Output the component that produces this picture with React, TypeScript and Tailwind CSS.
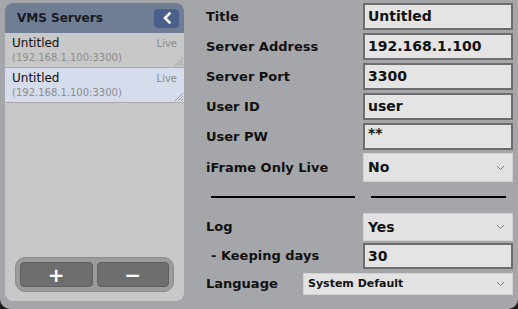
import React from 'react';

const servers = [
  { title: 'Untitled', addr: '(192.168.1.100:3300)', selected: false },
  { title: 'Untitled', addr: '(192.168.1.100:3300)', selected: true },
];

function Grip() {
  return (
    <svg className="absolute bottom-[1px] right-[1px]" width="9" height="9" viewBox="0 0 9 9">
      <path d="M9 1 L1 9 M9 4 L4 9 M9 7 L7 9" stroke="#9b9b9b" strokeWidth="1" />
    </svg>
  );
}

function Chevron() {
  return (
    <svg width="9" height="7" viewBox="0 0 9 7" className="absolute right-[7px] top-1/2 -translate-y-1/2">
      <path d="M1 1.5 L4.5 5 L8 1.5" fill="none" stroke="#7a7a7a" strokeWidth="1" />
    </svg>
  );
}

function TextBox({ value, small = false }: { value: string; small?: boolean }) {
  return (
    <div className="flex h-full w-[150px] items-center border-2 border-[#6d6d6d] bg-[#e4e4e4] pl-[3px] text-[14px] font-bold text-[#121212]">
      <span className={small ? 'self-start pt-[1px] leading-[14px]' : ''}>{value}</span>
    </div>
  );
}

function Select({ value, w = 'w-[150px]', size = 'text-[14px]' }: { value: string; w?: string; size?: string }) {
  return (
    <div className={`relative flex h-full ${w} items-center border border-[#d2d2d2] bg-[#e2e2e2] pl-[4px] ${size} font-bold text-[#121212]`}>
      {value}
      <Chevron />
    </div>
  );
}

function Row({ label, h, mt, indent = '', children }: { label: string; h: string; mt: string; indent?: string; children: React.ReactNode }) {
  return (
    <div className={`flex ${h} ${mt} items-center justify-between`}>
      <span className={`text-[13px] font-bold text-[#111] ${indent}`}>{label}</span>
      {children}
    </div>
  );
}

export default function App() {
  return (
    <div className="h-[309px] w-[518px] bg-[#1c1c1c] font-['DejaVu_Sans',sans-serif]">
      <div className="flex h-full w-full rounded-b-[10px] bg-[#a5a6aa]">
        {/* server list */}
        <div className="ml-[5px] mt-[3px] flex h-[298px] w-[179px] flex-col overflow-hidden rounded-[8px] bg-[#c8c8c8]">
          <div className="flex h-[30px] shrink-0 items-center justify-between bg-[#6f7d95] pl-[12px] pr-[5px]">
            <span className="text-[12px] font-bold text-[#161a22]">VMS Servers</span>
            <button className="flex h-[19px] w-[25px] items-center justify-center rounded-[4px] bg-[#4b5f8c]">
              <svg width="10" height="12" viewBox="0 0 10 12">
                <path d="M7.5 1.5 L3 6 L7.5 10.5" fill="none" stroke="#fff" strokeWidth="2.6" strokeLinecap="square" />
              </svg>
            </button>
          </div>
          {servers.map((s, i) => (
            <div
              key={i}
              className={`relative flex h-[35px] shrink-0 flex-col justify-center border-b border-[#a8a8a8] pl-[7px] ${s.selected ? 'bg-[#d6dcec]' : 'bg-[#c8c8c8]'}`}
            >
              <div className="flex items-baseline justify-between pr-[7px]">
                <span className="text-[12px] leading-[15px] text-[#101010]">{s.title}</span>
                <span className="text-[10px] text-[#8c8c8c]">Live</span>
              </div>
              <span className="text-[10px] leading-[13px] text-[#8c8c8c]">{s.addr}</span>
              <Grip />
            </div>
          ))}
          <div className="flex-1" />
          <div className="mx-[10px] mb-[9px] flex h-[35px] gap-[4px] rounded-[10px] border border-[#8c8c8c] bg-[#9b9b9b] p-[4px]">
            <button className="flex flex-1 items-center justify-center rounded-[4px] border border-[#5f5f5f] bg-[#6e6e6e] text-[20px] font-bold leading-none text-white">
              +
            </button>
            <button className="flex flex-1 items-center justify-center rounded-[4px] border border-[#5f5f5f] bg-[#6e6e6e] text-[20px] font-bold leading-none text-white">
              −
            </button>
          </div>
        </div>

        {/* settings */}
        <div className="flex flex-1 flex-col pl-[22px] pr-[5px]">
          <Row label="Title" h="h-[27px]" mt="mt-[3px]"><TextBox value="Untitled" /></Row>
          <Row label="Server Address" h="h-[27px]" mt="mt-[3px]"><TextBox value="192.168.1.100" /></Row>
          <Row label="Server Port" h="h-[27px]" mt="mt-[3px]"><TextBox value="3300" /></Row>
          <Row label="User ID" h="h-[27px]" mt="mt-[3px]"><TextBox value="user" /></Row>
          <Row label="User PW" h="h-[27px]" mt="mt-[3px]"><TextBox value="**" small /></Row>
          <Row label="iFrame Only Live" h="h-[29px]" mt="mt-[3px]"><Select value="No" /></Row>
          <div className="mt-[14px] flex h-[2px] pl-[5px]">
            <div className="h-[2px] w-[144px] bg-black" />
            <div className="ml-[16px] h-[2px] w-[135px] bg-black" />
          </div>
          <Row label="Log" h="h-[28px]" mt="mt-[15px]"><Select value="Yes" /></Row>
          <Row label="- Keeping days" h="h-[26px]" mt="mt-[2px]" indent="pl-[5px]">
            <TextBox value="30" />
          </Row>
          <Row label="Language" h="h-[22px]" mt="mt-[4px]">
            <Select value="System Default" w="w-[210px]" size="text-[11px]" />
          </Row>
        </div>
      </div>
    </div>
  );
}
